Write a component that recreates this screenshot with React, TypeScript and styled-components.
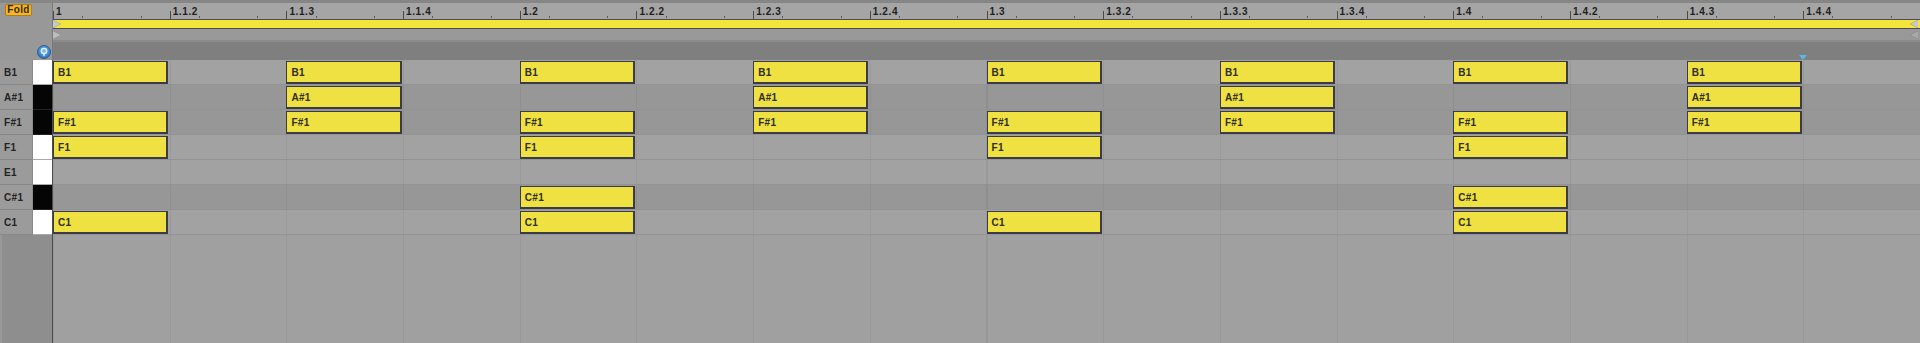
import styled, { createGlobalStyle } from "styled-components";

const STEPS = 16;
const GRID_WIDTH = 1867;
const STEP = GRID_WIDTH / STEPS;

interface Row {
  name: string;
  black: boolean;
  steps: number[];
}

const rows: Row[] = [
  { name: "B1", black: false, steps: [0, 2, 4, 6, 8, 10, 12, 14] },
  { name: "A#1", black: true, steps: [2, 6, 10, 14] },
  { name: "F#1", black: true, steps: [0, 2, 4, 6, 8, 10, 12, 14] },
  { name: "F1", black: false, steps: [0, 4, 8, 12] },
  { name: "E1", black: false, steps: [] },
  { name: "C#1", black: true, steps: [4, 12] },
  { name: "C1", black: false, steps: [0, 4, 8, 12] },
];

const stepLabel = (i: number) => {
  const beat = Math.floor(i / 4) + 1;
  const sub = (i % 4) + 1;
  if (i === 0) return "1";
  if (sub === 1) return `1.${beat}`;
  return `1.${beat}.${sub}`;
};

const GlobalStyle = createGlobalStyle`
  html, body {
    margin: 0;
    padding: 0;
    background: #a0a0a0;
    overflow: hidden;
  }
  body {
    font-family: "Liberation Sans", Arial, sans-serif;
  }
`;

const App = () => {
  return (
    <Page>
      <GlobalStyle />
      <Header>
        <HeaderSide>
          <FoldButton>Fold</FoldButton>
          <PreviewIcon>
            <svg width="14" height="14" viewBox="0 0 14 14">
              <defs>
                <radialGradient id="pv" cx="50%" cy="40%" r="60%">
                  <stop offset="0%" stopColor="#7fc0f5" />
                  <stop offset="100%" stopColor="#1f6fc4" />
                </radialGradient>
              </defs>
              <circle cx="7" cy="7" r="6.5" fill="url(#pv)" stroke="#2a4f80" strokeWidth="0.8" />
              <circle cx="7" cy="6" r="2.6" fill="none" stroke="#e8f3ff" strokeWidth="1.4" />
              <rect x="6.3" y="7.6" width="1.4" height="3.6" fill="#e8f3ff" />
            </svg>
          </PreviewIcon>
        </HeaderSide>
        <RulerColumn>
          <Ruler>
            {Array.from({ length: STEPS }).map((_, i) => (
              <RulerMark key={i} style={{ left: i * STEP }}>
                <Tick />
                <RulerText>{stepLabel(i)}</RulerText>
              </RulerMark>
            ))}
            {Array.from({ length: STEPS }).flatMap((_, i) => [
              <Dot key={`a${i}`} style={{ left: i * STEP + STEP * 0.25 }} />,
              <Dot key={`b${i}`} style={{ left: i * STEP + STEP * 0.75 }} />,
            ])}
          </Ruler>
          <LoopBar>
            <StartFlag $filled />
            <EndFlag />
          </LoopBar>
          <LoopLane>
            <StartFlag />
            <EndFlag $outline />
          </LoopLane>
          <Band>
            <EndMarker style={{ left: 15 * STEP - 1 }} />
          </Band>
        </RulerColumn>
      </Header>
      <Body>
        <KeyPanel>
          {rows.map((r) => (
            <KeyRow key={r.name}>
              <KeyLabel>{r.name}</KeyLabel>
              <Key $black={r.black} />
            </KeyRow>
          ))}
          <KeyFiller />
        </KeyPanel>
        <Grid>
          {rows.map((r) => (
            <Lane key={r.name} $black={r.black}>
              {r.steps.map((s) => (
                <Note key={s} style={{ left: s * STEP }}>
                  {r.name}
                </Note>
              ))}
            </Lane>
          ))}
          <GridFiller />
        </Grid>
      </Body>
    </Page>
  );
};

export default App;

const gridLines = `repeating-linear-gradient(
  to right,
  rgba(0, 0, 0, 0.05) 0 1px,
  transparent 1px ${STEP}px
)`;

const Page = styled.div`
  width: 1920px;
  height: 343px;
  display: flex;
  flex-direction: column;
  background: #a0a0a0;
`;

const Header = styled.div`
  display: flex;
  height: 60px;
  border-top: 3px solid #868686;
  box-sizing: border-box;
`;

const HeaderSide = styled.div`
  width: 52px;
  background: #989898;
  display: flex;
  flex-direction: column;
  justify-content: space-between;
  padding: 1px 1px 0 5px;
  box-sizing: border-box;
`;

const FoldButton = styled.div`
  width: 27px;
  height: 12px;
  background: #f4b52c;
  border: 1px solid #b07c14;
  border-radius: 2px;
  box-sizing: border-box;
  font-size: 10px;
  font-weight: 700;
  line-height: 10px;
  color: #3a2a05;
  text-align: center;
  letter-spacing: 0.3px;
`;

const PreviewIcon = styled.div`
  align-self: flex-end;
  width: 14px;
  height: 14px;
  margin-bottom: 1px;
`;

const RulerColumn = styled.div`
  flex: 1;
  display: flex;
  flex-direction: column;
  border-left: 1px solid #7a7a7a;
`;

const Ruler = styled.div`
  position: relative;
  height: 16px;
  background: #a5a5a5;
`;

const RulerMark = styled.div`
  position: absolute;
  top: 4px;
  display: flex;
  align-items: flex-start;
`;

const Tick = styled.div`
  width: 1px;
  height: 8px;
  margin-top: 4px;
  background: #4a4a4a;
`;

const RulerText = styled.span`
  font-size: 10px;
  font-weight: 700;
  line-height: 10px;
  color: #1e1e1e;
  margin-left: 2px;
  letter-spacing: 0.6px;
`;

const Dot = styled.div`
  position: absolute;
  top: 13px;
  width: 1px;
  height: 2px;
  background: #5a5a5a;
`;

const LoopBar = styled.div`
  height: 8px;
  background: #f3e53a;
  border-top: 1px solid #4c4a5c;
  border-bottom: 1px solid #4c4a5c;
  display: flex;
  justify-content: space-between;
  align-items: center;
`;

const LoopLane = styled.div`
  height: 11px;
  background: #999999;
  border-bottom: 1px solid #8a8a8a;
  display: flex;
  justify-content: space-between;
  align-items: center;
`;

const StartFlag = styled.div<{ $filled?: boolean }>`
  width: 0;
  height: 0;
  border-top: 4.5px solid transparent;
  border-bottom: 4.5px solid transparent;
  border-left: 8px solid ${({ $filled }) => ($filled ? "#c8c8c8" : "#bdbdbd")};
  filter: drop-shadow(0 0 0.6px #555);
`;

const EndFlag = styled.div<{ $outline?: boolean }>`
  width: 0;
  height: 0;
  border-top: 4.5px solid transparent;
  border-bottom: 4.5px solid transparent;
  border-right: 8px solid ${({ $outline }) => ($outline ? "#a8a8a8" : "#c8c8c8")};
  filter: drop-shadow(0 0 0.6px #555);
  margin-right: 2px;
`;

const Band = styled.div`
  position: relative;
  flex: 1;
  background: #7f7f7f;
  border-top: 1px solid #8c8c8c;
`;

const EndMarker = styled.div`
  position: absolute;
  bottom: 0;
  width: 0;
  height: 0;
  border-left: 4px solid transparent;
  border-right: 4px solid transparent;
  border-top: 5px solid #55b9ea;
  transform: translateX(-3px);
`;

const Body = styled.div`
  flex: 1;
  display: flex;
`;

const KeyPanel = styled.div`
  width: 52px;
  display: flex;
  flex-direction: column;
  background: #8e8e8e;
`;

const KeyRow = styled.div`
  display: flex;
  height: 25px;
`;

const KeyLabel = styled.div`
  width: 33px;
  box-sizing: border-box;
  padding-left: 4px;
  background: #9b9b9b;
  border-bottom: 1px solid #888;
  border-right: 1px solid #8a8a8a;
  font-size: 10px;
  font-weight: 700;
  color: #232323;
  display: flex;
  align-items: center;
  letter-spacing: 0.3px;
`;

const Key = styled.div<{ $black: boolean }>`
  flex: 1;
  background: ${({ $black }) => ($black ? "#050505" : "#ffffff")};
  border-bottom: 1px solid ${({ $black }) => ($black ? "#222" : "#a8a8a8")};
`;

const KeyFiller = styled.div`
  flex: 1;
  background: #8e8e8e;
  border-left: 2px solid #999;
`;

const Grid = styled.div`
  flex: 1;
  display: flex;
  flex-direction: column;
  border-left: 1px solid #4d4d4d;
`;

const Lane = styled.div<{ $black: boolean }>`
  position: relative;
  height: 25px;
  box-sizing: border-box;
  border-bottom: 1px solid #939393;
  background-color: ${({ $black }) => ($black ? "#979797" : "#a2a2a2")};
  background-image: ${gridLines};
`;

const Note = styled.div`
  position: absolute;
  top: 1px;
  width: ${STEP - 1.5}px;
  height: 23px;
  box-sizing: border-box;
  background: #efe141;
  border: 1px solid #3b3a47;
  border-width: 1px 2px 2px 1px;
  padding-left: 4px;
  display: flex;
  align-items: center;
  font-size: 10px;
  font-weight: 700;
  color: #2e2c1c;
  letter-spacing: 0.3px;
`;

const GridFiller = styled.div`
  flex: 1;
  background-color: #a0a0a0;
  background-image: ${gridLines};
`;
